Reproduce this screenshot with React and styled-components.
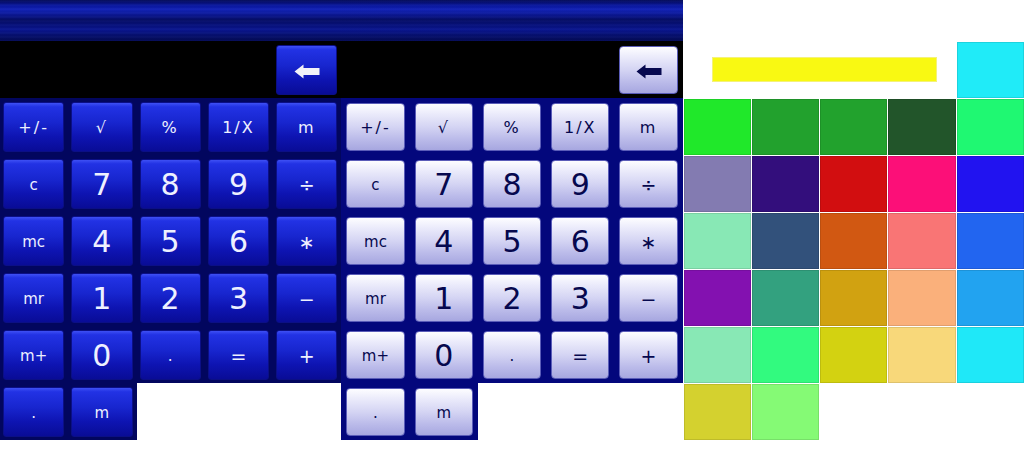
import React from "react";
import styled, { createGlobalStyle, css } from "styled-components";

const GlobalStyle = createGlobalStyle`
  html, body { margin: 0; padding: 0; background: #ffffff; }
  body { font-family: "DejaVu Sans", "Liberation Sans", sans-serif; }
`;

const Page = styled.div`
  display: flex;
  width: 1024px;
  height: 458px;
  overflow: hidden;
  background: #ffffff;
`;

const Panel = styled.section`
  flex: 1 1 0;
  min-width: 0;
  display: flex;
  flex-direction: column;
`;

const HeaderBand = styled.div`
  height: 41px;
  flex: 0 0 41px;
  background:
    repeating-linear-gradient(
      to bottom,
      rgba(255, 255, 255, 0.015) 0px,
      rgba(255, 255, 255, 0.015) 2px,
      rgba(0, 0, 0, 0.03) 2px,
      rgba(0, 0, 0, 0.03) 4px
    ),
    linear-gradient(
      to bottom,
      #030a58 0px,
      #0b19a4 6px,
      #1222b6 10px,
      #0b1792 15px,
      #050d66 20px,
      #07117c 25px,
      #0a1690 30px,
      #061070 35px,
      #030a56 41px
    );
`;

const BlankHeader = styled.div`
  height: 41px;
  flex: 0 0 41px;
`;

const KeyGrid = styled.div`
  display: grid;
  grid-template-columns: repeat(5, 1fr);
  grid-auto-rows: 57px;
`;

const Display = styled.div`
  grid-column: span 4;
  background: #000000;
`;

const Cell = styled.div`
  display: flex;
  background: ${(p) => (p.$black ? "#000000" : p.$tone === "light" ? "#03077c" : "#02065e")};
  padding: ${(p) => (p.$tone === "light" ? "5px 5px 4px 5px" : "4px 4px 3px 3px")};
`;

const sizes = {
  digit: css`
    font-size: 30px;
  `,
  op: css`
    font-size: 19px;
  `,
  small: css`
    font-size: 15px;
  `,
  top: css`
    font-size: 16px;
    letter-spacing: 2px;
  `,
};

const Key = styled.button`
  flex: 1;
  min-width: 0;
  margin: 0;
  padding: 2px 0 0 0;
  display: flex;
  align-items: center;
  justify-content: center;
  font-family: "DejaVu Sans", "Liberation Sans", sans-serif;
  font-weight: normal;
  line-height: 1;
  cursor: pointer;
  ${(p) =>
    p.$tone === "light"
      ? css`
          color: #06084e;
          border: 1px solid #5a5cb8;
          border-radius: 4px;
          background: linear-gradient(
            to bottom,
            #fdfdff 0%,
            #ececfb 20%,
            #d4d4f3 50%,
            #bcbcea 75%,
            #a7a7e0 100%
          );
        `
      : css`
          color: #eef0ff;
          border: 1px solid #0b0f86;
          border-radius: 3px;
          background: linear-gradient(
            to bottom,
            #3e50f4 0%,
            #2232e4 8%,
            #1826cf 40%,
            #0e14b2 70%,
            #090c96 100%
          );
        `}
  ${(p) => sizes[p.$size || "small"]}
`;

const BackIcon = ({ color }) => (
  <svg width="26" height="15" viewBox="0 0 26 15" aria-hidden="true">
    <path d="M0.5 7.5 L9.5 0.5 L9.5 4 L25.5 4 L25.5 11 L9.5 11 L9.5 14.5 Z" fill={color} />
  </svg>
);

const keyRows = [
  [
    ["+/-", "top"],
    ["√", "top"],
    ["%", "top"],
    ["1/X", "top"],
    ["m", "top"],
  ],
  [
    ["c", "small"],
    ["7", "digit"],
    ["8", "digit"],
    ["9", "digit"],
    ["÷", "op"],
  ],
  [
    ["mc", "small"],
    ["4", "digit"],
    ["5", "digit"],
    ["6", "digit"],
    ["∗", "op"],
  ],
  [
    ["mr", "small"],
    ["1", "digit"],
    ["2", "digit"],
    ["3", "digit"],
    ["−", "op"],
  ],
  [
    ["m+", "small"],
    ["0", "digit"],
    [".", "small"],
    ["=", "op"],
    ["+", "op"],
  ],
  [
    [".", "small"],
    ["m", "small"],
  ],
];

const Calculator = ({ tone }) => (
  <Panel>
    <HeaderBand />
    <KeyGrid>
      <Display />
      <Cell $tone={tone} $black>
        <Key $tone={tone} aria-label="backspace">
          <BackIcon color={tone === "light" ? "#07094f" : "#f2f2f8"} />
        </Key>
      </Cell>
      {keyRows.flat().map(([label, size], i) => (
        <Cell key={i} $tone={tone}>
          <Key $tone={tone} $size={size}>
            {label}
          </Key>
        </Cell>
      ))}
    </KeyGrid>
  </Panel>
);

const SwatchGrid = styled.div`
  display: grid;
  grid-template-columns: repeat(5, 1fr);
  grid-auto-rows: 56px;
  gap: 1px;
  padding: 1px 0 0 1px;
`;

const BarCell = styled.div`
  grid-column: span 4;
  display: flex;
  align-items: center;
  padding: 0 19px 1px 28px;
`;

const YellowBar = styled.div`
  flex: 1;
  height: 25px;
  background: #f9f912;
  box-shadow: inset 0 0 0 1px #f4f27a;
`;

const Swatch = styled.div`
  background: ${(p) => p.$color};
  box-shadow: inset 0 0 0 1px rgba(0, 0, 0, 0.1);
`;

const swatches = [
  "#20e82a", "#22a12d", "#22a22d", "#22552a", "#1ff872",
  "#837bb1", "#330e7c", "#d20e10", "#fc0f78", "#2113f0",
  "#88e8b5", "#32517b", "#d15812", "#f97575", "#2265f0",
  "#8311b0", "#33a17f", "#d1a211", "#fab07b", "#22a3f0",
  "#88e8b5", "#32fa7f", "#d3d211", "#f8d87a", "#1fe8f8",
  "#d4d12f", "#85fa75",
];

const Palette = () => (
  <Panel>
    <BlankHeader />
    <SwatchGrid>
      <BarCell>
        <YellowBar />
      </BarCell>
      <Swatch $color="#20ebf8" />
      {swatches.map((c, i) => (
        <Swatch key={i} $color={c} />
      ))}
    </SwatchGrid>
  </Panel>
);

export default function App() {
  return (
    <>
      <GlobalStyle />
      <Page>
        <Calculator tone="dark" />
        <Calculator tone="light" />
        <Palette />
      </Page>
    </>
  );
}
